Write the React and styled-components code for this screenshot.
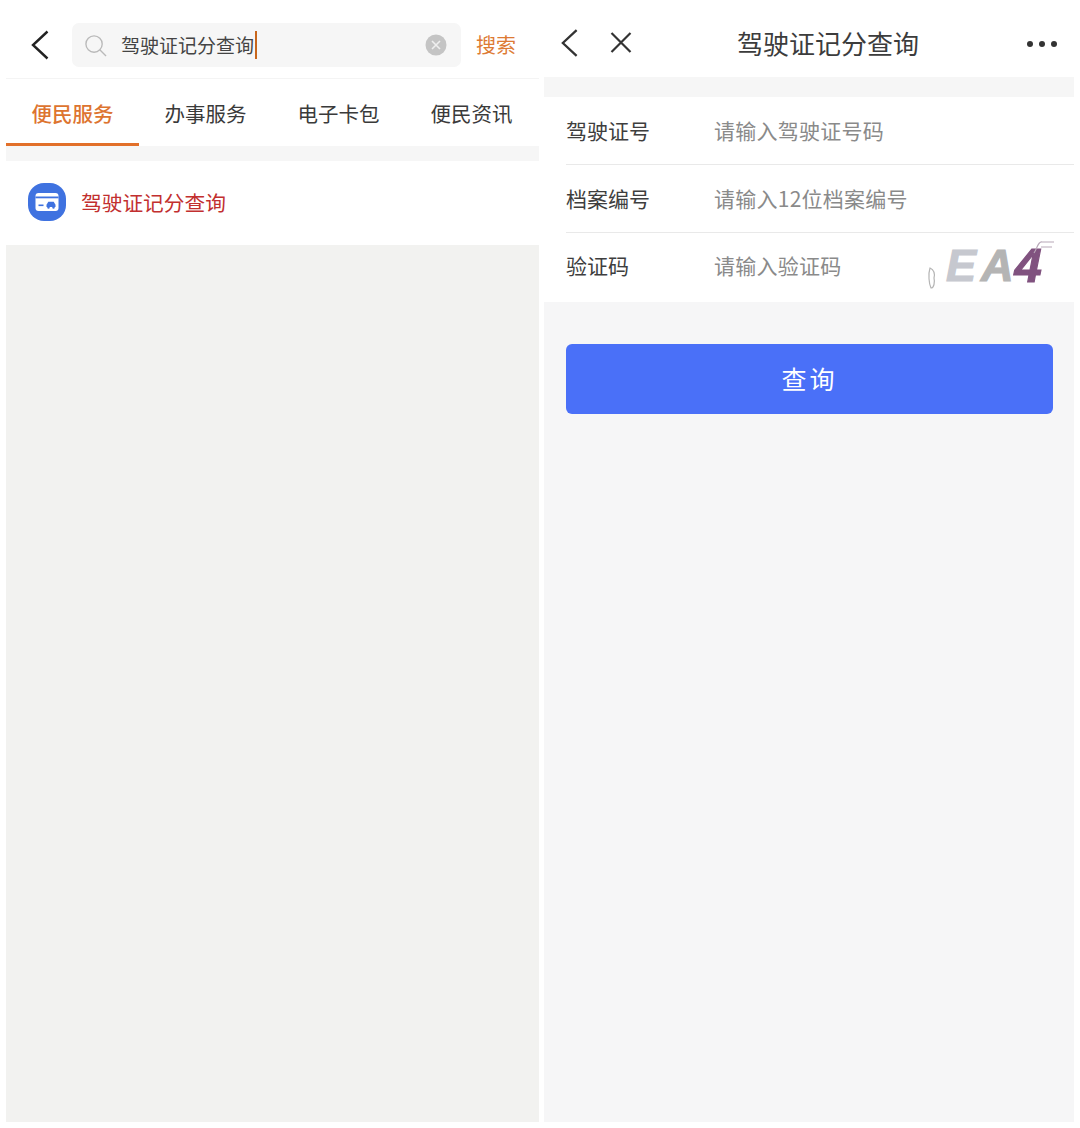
import React from "react";
import styled, { createGlobalStyle } from "styled-components";

const GlobalStyle = createGlobalStyle`
  html, body {
    margin: 0;
    padding: 0;
    background: #fff;
  }
  * {
    box-sizing: border-box;
  }
`;

const fontStack = `"Noto Sans CJK SC", "Liberation Sans", sans-serif`;

const Page = styled.div`
  display: flex;
  width: 1080px;
  height: 1128px;
  padding: 0 6px 6px 6px;
  gap: 5px;
  font-family: ${fontStack};
  background: #fff;
`;

const Panel = styled.div`
  display: flex;
  flex-direction: column;
  width: ${(p) => p.$width}px;
  height: 100%;
`;

const Filler = styled.div`
  flex: 1;
  background: ${(p) => p.$bg};
`;

const SearchBar = styled.div`
  display: flex;
  align-items: center;
  height: 79px;
  padding: 12px 22px 0 23px;
  border-bottom: 1px solid #f4f4f4;
`;

const IconSlot = styled.div`
  display: flex;
  align-items: center;
  justify-content: center;
  flex: none;
  width: ${(p) => p.$size}px;
  height: ${(p) => p.$size}px;
  margin-left: ${(p) => p.$gap || 0}px;
  color: ${(p) => p.$color || "#222"};
`;

const SearchBox = styled.div`
  display: flex;
  align-items: center;
  flex: none;
  width: 389px;
  height: 44px;
  margin-left: 22px;
  padding: 0 14px 0 12px;
  background: #f6f6f6;
  border-radius: 7px;
`;

const SearchText = styled.div`
  flex: 1;
  margin-left: 14px;
  display: flex;
  align-items: center;
  font-size: 19px;
  line-height: 28px;
  color: #444;
`;

const Caret = styled.span`
  display: inline-block;
  width: 1.5px;
  height: 28px;
  margin-left: 1px;
  background: #c8661c;
`;

const SearchAction = styled.span`
  flex: none;
  margin-left: 15px;
  font-size: 20px;
  line-height: 28px;
  white-space: nowrap;
  color: #dd7a34;
`;

const Tabs = styled.div`
  display: grid;
  grid-template-columns: repeat(4, 133px);
  height: 67px;
`;

const Tab = styled.div`
  display: flex;
  align-items: center;
  justify-content: center;
  padding-top: 4px;
  font-size: 20.5px;
  font-weight: ${(p) => (p.$active ? 500 : 400)};
  color: ${(p) => (p.$active ? "#dd7430" : "#3a3a3a")};
  border-bottom: 3px solid ${(p) => (p.$active ? "#e2702a" : "transparent")};
`;

const Strip = styled.div`
  height: ${(p) => p.$height}px;
  background: #f6f6f6;
`;

const ResultRow = styled.div`
  display: flex;
  align-items: center;
  height: 84px;
  padding-left: 22px;
  padding-bottom: 2px;
  font-size: 20.7px;
  color: #c22f2f;
`;

const ResultLabel = styled.span`
  margin-left: 15px;
`;

const NavBar = styled.div`
  display: flex;
  align-items: center;
  height: 77px;
  padding: 8px 17px 0 14px;
`;

const NavTitle = styled.div`
  flex: 1;
  margin-left: -4px;
  text-align: center;
  font-size: 26px;
  line-height: 34px;
  color: #3c3c3c;
`;

const MoreDots = styled.div`
  display: flex;
  gap: 6px;
  margin-top: 2px;
`;

const Dot = styled.span`
  width: 6px;
  height: 6px;
  border-radius: 50%;
  background: #333;
`;

const Form = styled.div`
  display: flex;
  flex-direction: column;
  padding-left: 22px;
`;

const FormRow = styled.div`
  display: flex;
  align-items: center;
  height: ${(p) => (p.$last ? 69 : 68)}px;
  padding-bottom: ${(p) => (p.$last ? 5 : 2)}px;
  font-size: 21px;
  border-bottom: ${(p) => (p.$last ? "0" : "1px solid #e9e9e9")};
`;

const FieldLabel = styled.span`
  width: 148px;
  color: #3e3e3e;
`;

const Placeholder = styled.span`
  flex: 1;
  letter-spacing: 0.25px;
  color: #8a8a8a;
`;

const Captcha = styled.div`
  position: relative;
  display: flex;
  align-items: center;
  width: 148px;
  height: 100%;
  font-family: "Liberation Sans", sans-serif;
  font-style: italic;
  font-weight: 700;
  -webkit-text-stroke: 1.2px currentColor;
`;

const CaptchaChar = styled.span`
  margin-left: ${(p) => p.$gap}px;
  font-size: ${(p) => p.$size}px;
  color: ${(p) => p.$color};
  line-height: 1;
`;

const CaptchaMark = styled.svg`
  position: absolute;
  left: ${(p) => p.$left}px;
  top: ${(p) => p.$top}px;
  pointer-events: none;
  -webkit-text-stroke: 0;
`;

const Actions = styled.div`
  flex: 1;
  padding: 42px 21px 0 22px;
  background: #f6f6f7;
`;

const SubmitButton = styled.button`
  display: block;
  width: 487px;
  height: 70px;
  padding: 0 0 2px;
  border: 0;
  border-radius: 6px;
  background: #4a70f8;
  color: #fff;
  font-family: ${fontStack};
  font-size: 25px;
  letter-spacing: 3px;
`;

const tabs = ["便民服务", "办事服务", "电子卡包", "便民资讯"];

const BackIcon = ({ w, h }) => (
  <svg width={w} height={h} viewBox="0 0 20 30" fill="none" stroke="currentColor" strokeWidth="2.4">
    <path d="M17.5 1.5 L3 15 L17.5 28.5" />
  </svg>
);

const CardIcon = () => (
  <svg width="38" height="38" viewBox="0 0 38 38">
    <rect width="38" height="38" rx="16" fill="#3f72e0" />
    <rect x="7.5" y="10" width="23" height="18" rx="3" fill="#fff" />
    <rect x="7.5" y="13.5" width="23" height="1.8" fill="#3f72e0" />
    <rect x="10.5" y="21.5" width="5" height="1.6" fill="#3f72e0" />
    <path d="M18.5 24 v-2.2 l1.8 -3 h5.4 l1.8 3 v2.2 z" fill="#3f72e0" />
    <circle cx="20.5" cy="24.6" r="1.2" fill="#3f72e0" />
    <circle cx="25.5" cy="24.6" r="1.2" fill="#3f72e0" />
  </svg>
);

export default function App() {
  return (
    <>
      <GlobalStyle />
      <Page>
        <Panel $width={533}>
          <SearchBar>
            <IconSlot $size={21}>
              <BackIcon w={20} h={30} />
            </IconSlot>
            <SearchBox>
              <svg width="23" height="23" viewBox="0 0 24 24" fill="none" stroke="#b9b9b9" strokeWidth="1.4">
                <circle cx="10.5" cy="10.5" r="8.5" />
                <path d="M16.5 16.5 L23 23" />
              </svg>
              <SearchText>
                驾驶证记分查询
                <Caret />
              </SearchText>
              <svg width="22" height="22" viewBox="0 0 22 22">
                <circle cx="11" cy="11" r="10.5" fill="#c4c4c4" />
                <path d="M7 7 L15 15 M15 7 L7 15" stroke="#efefef" strokeWidth="1.6" />
              </svg>
            </SearchBox>
            <SearchAction>搜索</SearchAction>
          </SearchBar>
          <Tabs>
            {tabs.map((t, i) => (
              <Tab key={t} $active={i === 0}>
                {t}
              </Tab>
            ))}
          </Tabs>
          <Strip $height={15} />
          <ResultRow>
            <CardIcon />
            <ResultLabel>驾驶证记分查询</ResultLabel>
          </ResultRow>
          <Filler $bg="#f2f2f0" />
        </Panel>
        <Panel $width={530}>
          <NavBar>
            <IconSlot $size={22} $color="#333">
              <BackIcon w={19} h={30} />
            </IconSlot>
            <IconSlot $size={24} $color="#333" $gap={29}>
              <svg width="24" height="24" viewBox="0 0 24 24" fill="none" stroke="currentColor" strokeWidth="2.2">
                <path d="M2.5 2 L21.5 21 M21.5 2 L2.5 21" />
              </svg>
            </IconSlot>
            <NavTitle>驾驶证记分查询</NavTitle>
            <MoreDots>
              <Dot />
              <Dot />
              <Dot />
            </MoreDots>
          </NavBar>
          <Strip $height={20} />
          <Form>
            <FormRow>
              <FieldLabel>驾驶证号</FieldLabel>
              <Placeholder>请输入驾驶证号码</Placeholder>
            </FormRow>
            <FormRow>
              <FieldLabel>档案编号</FieldLabel>
              <Placeholder>请输入12位档案编号</Placeholder>
            </FormRow>
            <FormRow $last>
              <FieldLabel>验证码</FieldLabel>
              <Placeholder>请输入验证码</Placeholder>
              <Captcha>
                <CaptchaMark $left={1} $top={33} width="12" height="24" viewBox="0 0 12 24" fill="none" stroke="#b5b5b5" strokeWidth="1.2">
                  <path d="M3 2 C1 8 2 18 4 22 C7 22 8 16 7 12 C8 8 7 4 3 2 Z" />
                </CaptchaMark>
                <CaptchaChar $gap={20} $size={45} $color="#c6c8cf">E</CaptchaChar>
                <CaptchaChar $gap={5} $size={45} $color="#b4b4b4">A</CaptchaChar>
                <CaptchaChar $gap={1} $size={49} $color="#80527f">4</CaptchaChar>
                <CaptchaMark $left={106} $top={6} width="24" height="20" viewBox="0 0 24 20" fill="none" stroke="#b8a7b8" strokeWidth="1.2">
                  <path d="M2 14 C5 10 6 2 10 3 H22 M9 8 H20" />
                </CaptchaMark>
              </Captcha>
            </FormRow>
          </Form>
          <Actions>
            <SubmitButton>查询</SubmitButton>
          </Actions>
        </Panel>
      </Page>
    </>
  );
}
